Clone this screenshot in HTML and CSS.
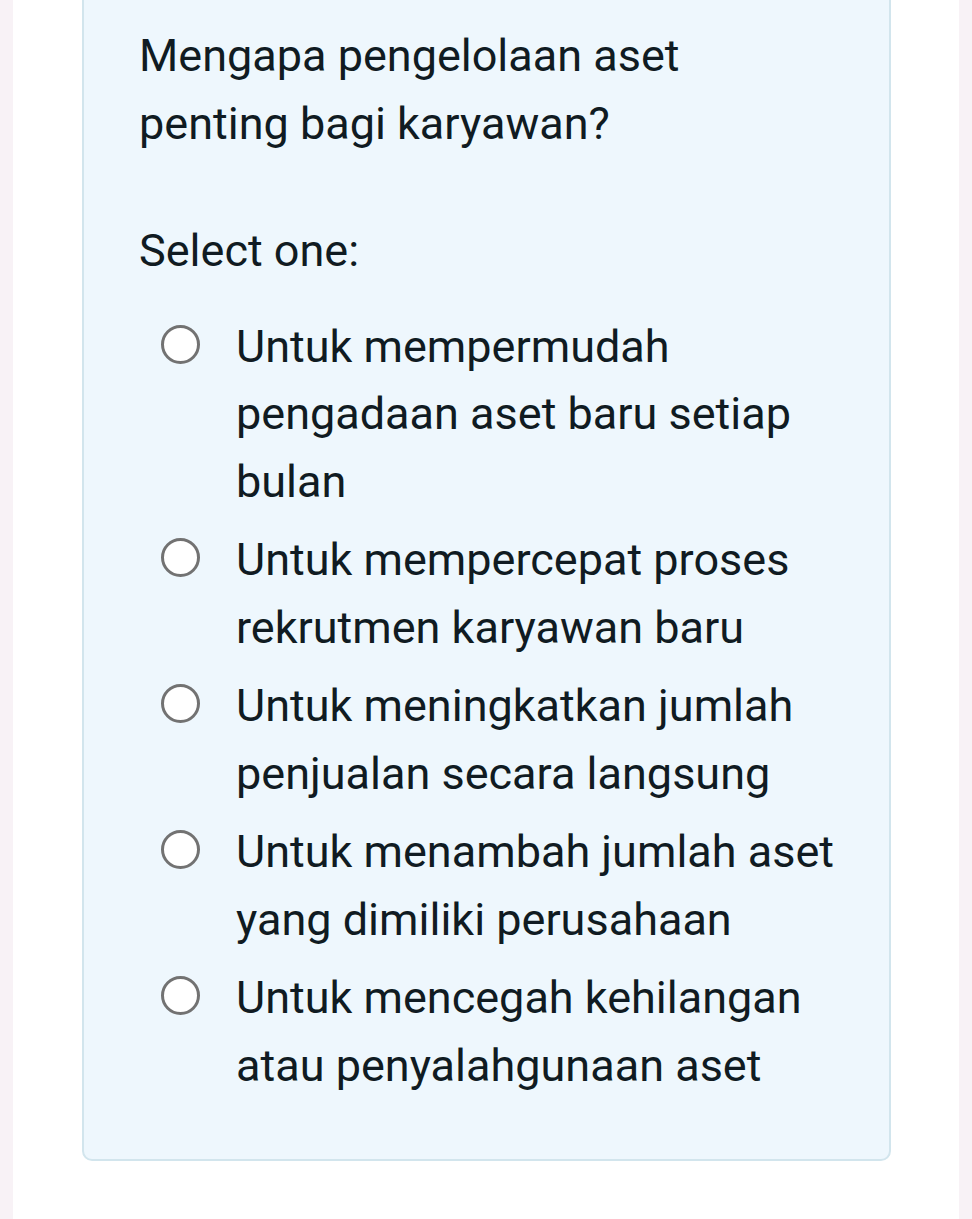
FILE: index.html
```html
<!DOCTYPE html>
<html lang="id">
<head>
<meta charset="utf-8">
<title>Quiz</title>
<link rel="stylesheet" href="styles.css">
</head>
<body>
<div class="page">
  <div class="edge"></div>
  <main class="main">
    <section class="card">
      <div class="qtext">Mengapa pengelolaan aset penting bagi karyawan?</div>
      <div class="prompt">Select one:</div>
      <div class="answers">
        <label class="opt"><span class="radio"></span><span class="label">Untuk mempermudah pengadaan aset baru setiap bulan</span></label>
        <label class="opt"><span class="radio"></span><span class="label">Untuk mempercepat proses rekrutmen karyawan baru</span></label>
        <label class="opt"><span class="radio"></span><span class="label">Untuk meningkatkan jumlah penjualan secara langsung</span></label>
        <label class="opt"><span class="radio"></span><span class="label">Untuk menambah jumlah aset yang dimiliki perusahaan</span></label>
        <label class="opt"><span class="radio"></span><span class="label">Untuk mencegah kehilangan atau penyalahgunaan aset</span></label>
      </div>
    </section>
  </main>
  <div class="edge"></div>
</div>
</body>
</html>
```

FILE: styles.css
```css
html, body {
  margin: 0;
  padding: 0;
  background: #ffffff;
}
body {
  font-family: Roboto, "Noto Sans", Arial, sans-serif;
  color: #101b22;
  overflow: hidden;
}
.page {
  display: flex;
  min-height: 1219px;
}
.edge {
  width: 13px;
  flex: none;
  background: #f8f2f6;
}
.main {
  flex: 1;
  padding: 0 68px 0 69px;
}
.card {
  margin-top: -40px;
  background: #eef7fd;
  border: 2px solid #d2e5ed;
  border-radius: 10px;
  padding: 60px 40px 60px 55px;
  font-size: 45px;
  line-height: 67.5px;
}
.qtext {
  max-width: 580px;
}
.prompt {
  margin-top: 60px;
}
.answers {
  margin-top: 28px;
  display: flex;
  flex-direction: column;
  gap: 11px;
}
.opt {
  display: flex;
  align-items: flex-start;
  padding-left: 22px;
}
.radio {
  flex: none;
  width: 33px;
  height: 33px;
  border: 3px solid #727272;
  border-radius: 50%;
  background: #ffffff;
  margin-top: 12px;
  margin-right: 36px;
}
.label {
  flex: 1;
}
```
